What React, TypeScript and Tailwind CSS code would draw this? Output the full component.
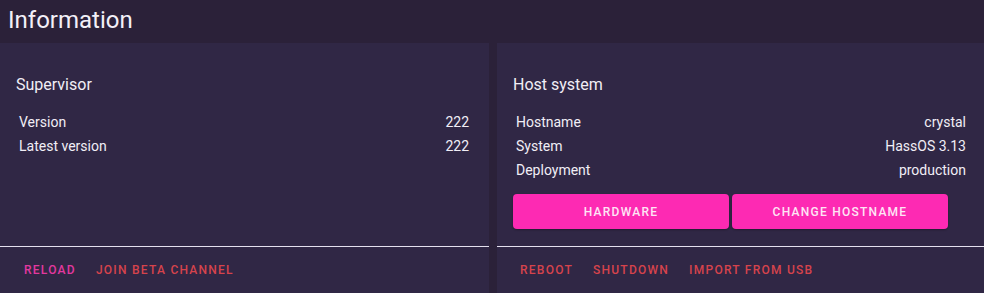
import React from "react";

const Row = ({ label, value }: { label: string; value: string }) => (
  <div className="flex justify-between pl-[3px] pr-[4px] text-[14px] leading-[24px] text-[#f1eef6]">
    <span>{label}</span>
    <span>{value}</span>
  </div>
);

const FooterBtn = ({ children, color }: { children: React.ReactNode; color: string }) => (
  <span
    className={`px-2 text-[12px] font-medium uppercase leading-[16px] tracking-[1.25px] ${color}`}
  >
    {children}
  </span>
);

export default function App() {
  return (
    <div
      className="w-[984px] h-[293px] overflow-hidden bg-[#2b2139]"
      style={{ fontFamily: "Roboto, 'Noto Sans', sans-serif" }}
    >
      <div className="h-[43px] px-2 pt-[4px] text-[24px] leading-[32px] text-[#f3f0f8]">
        Information
      </div>
      <div className="grid grid-cols-[489px_489px] gap-2">
        {/* Supervisor card */}
        <div className="flex flex-col bg-[#302745]">
          <div className="flex-1 px-4 pt-[30px] pb-[17px]">
            <div className="text-[16px] leading-[24px] text-[#f1eef6]">Supervisor</div>
            <div className="mt-[13px]">
              <Row label="Version" value="222" />
              <Row label="Latest version" value="222" />
            </div>
          </div>
          <div className="h-[48px] border-t border-[#e4e0ee] pt-[15px] pl-[16px] flex items-start gap-1">
            <FooterBtn color="text-[#e2389f]">Reload</FooterBtn>
            <FooterBtn color="text-[#d6434c]">Join beta channel</FooterBtn>
          </div>
        </div>
        {/* Host system card */}
        <div className="flex flex-col bg-[#302745]">
          <div className="flex-1 px-4 pt-[30px] pb-[17px]">
            <div className="text-[16px] leading-[24px] text-[#f1eef6]">Host system</div>
            <div className="mt-[13px]">
              <Row label="Hostname" value="crystal" />
              <Row label="System" value="HassOS 3.13" />
              <Row label="Deployment" value="production" />
            </div>
            <div className="mt-[12px] flex gap-[3px]">
              <button className="w-[216px] h-[35px] rounded-[4px] bg-[#fd2ab3] text-[12px] font-medium uppercase tracking-[1.25px] text-[#fde6f5] shadow-[0_1px_2px_rgba(0,0,0,0.3)]">
                Hardware
              </button>
              <button className="w-[216px] h-[35px] rounded-[4px] bg-[#fd2ab3] text-[12px] font-medium uppercase tracking-[1.25px] text-[#fde6f5] shadow-[0_1px_2px_rgba(0,0,0,0.3)]">
                Change hostname
              </button>
            </div>
          </div>
          <div className="h-[48px] border-t border-[#e4e0ee] pt-[15px] pl-[15px] flex items-start gap-1">
            <FooterBtn color="text-[#d6434c]">Reboot</FooterBtn>
            <FooterBtn color="text-[#d6434c]">Shutdown</FooterBtn>
            <FooterBtn color="text-[#d6434c]">Import from USB</FooterBtn>
          </div>
        </div>
      </div>
    </div>
  );
}
